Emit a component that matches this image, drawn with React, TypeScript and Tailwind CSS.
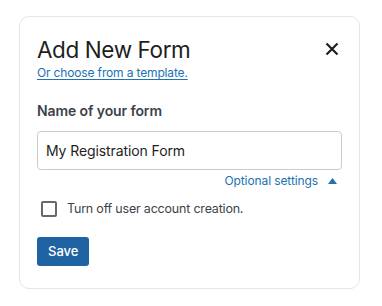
import React, { useState } from 'react';

const App: React.FC = () => {
  const [name, setName] = useState('My Registration Form');
  const [disableAccounts, setDisableAccounts] = useState(false);

  return (
    <div className="min-h-screen bg-white pt-4 pl-[19px]" style={{ fontFamily: 'Inter, "Noto Sans", sans-serif' }}>
      <div className="w-[341px] h-[273px] rounded-[10px] border border-[#e5e5e7] px-[17px] pt-[19px]">
        {/* Header */}
        <div className="flex items-start justify-between">
          <h1 className="text-[22.5px] leading-[28px] font-normal text-[#1e1e1e] tracking-[-0.4px]">Add New Form</h1>
          <button className="mt-[6px] mr-[3px] text-[#1e1e1e]" aria-label="Close">
            <svg width="14" height="14" viewBox="0 0 14 14" fill="none">
              <path d="M1.5 1.5 L12.5 12.5 M12.5 1.5 L1.5 12.5" stroke="currentColor" strokeWidth="2.2" />
            </svg>
          </button>
        </div>
        <a href="#" className="block mt-[1px] text-[12px] leading-4 text-[#2271b1] underline underline-offset-2 tracking-[-0.15px]">
          Or choose from a template.
        </a>

        {/* Name field */}
        <label className="block mt-[20px] text-[14px] leading-5 font-semibold text-[#3c434a] tracking-[-0.1px]">Name of your form</label>
        <input
          className="mt-[10px] w-full h-[39px] rounded-[4px] border border-[#c8ccd1] px-[8px] text-[14px] text-[#1e1e1e] outline-none tracking-[-0.1px]"
          value={name}
          onChange={(e) => setName(e.target.value)}
        />
        <div className="flex justify-end items-center gap-[10px] mt-[1px] pr-[5px] text-[12px] leading-5 text-[#2271b1] tracking-[-0.1px]">
          <span>Optional settings</span>
          <svg width="9" height="6" viewBox="0 0 9 6">
            <path d="M4.5 0 L9 6 L0 6 Z" fill="currentColor" />
          </svg>
        </div>

        {/* Checkbox */}
        <label className="flex items-center gap-[10px] mt-[8px] ml-[4px] text-[12.5px] leading-5 text-[#3c434a] tracking-[-0.2px]">
          <input
            type="checkbox"
            checked={disableAccounts}
            onChange={(e) => setDisableAccounts(e.target.checked)}
            className="appearance-none w-4 h-4 rounded-[2px] border-2 border-[#646970] bg-white"
          />
          Turn off user account creation.
        </label>

        <button className="mt-[18px] h-[29px] px-[11px] rounded-[3px] bg-[#2063a3] text-white text-[13px] font-medium">
          Save
        </button>
      </div>
    </div>
  );
};

export default App;
